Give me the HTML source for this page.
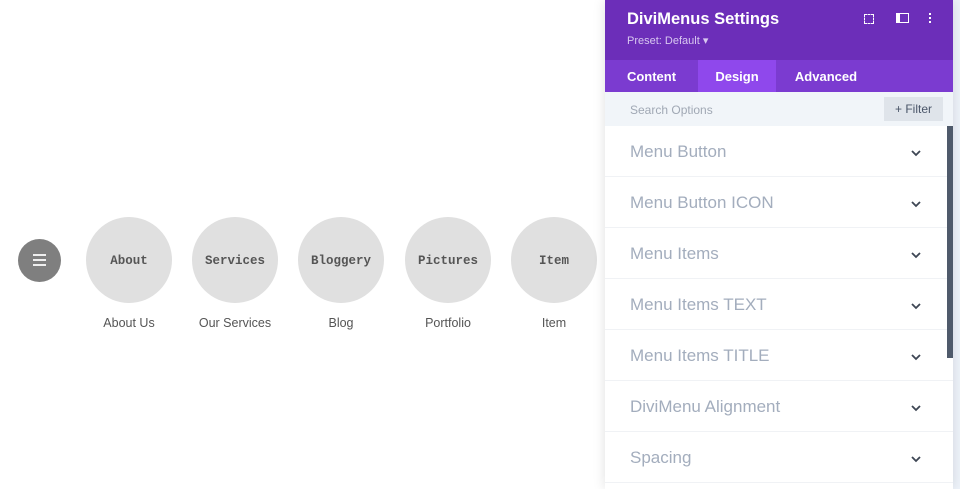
<!DOCTYPE html><html><head><style>
body{margin:0;width:960px;height:489px;overflow:hidden;background:#fff;font-family:"Liberation Sans",sans-serif;position:relative}
.c{position:absolute;top:217px;width:86px;height:86px;border-radius:50%;background:#e0e0e0;font-family:"Liberation Mono",monospace;font-size:12.5px;font-weight:bold;color:#555;display:flex;align-items:center;justify-content:center;padding-top:2px;box-sizing:border-box}
.l{position:absolute;top:316px;width:120px;text-align:center;font-size:12.5px;color:#555}
#p{position:absolute;left:605px;top:0;width:348px;height:489px;background:#fff;box-shadow:0 0 12px rgba(0,0,0,.12)}
.h{background:#6c2eb9;height:60px;position:relative;color:#fff}
.t{background:#7b3bd0;height:32px;display:flex;color:#fff;font-size:13px;font-weight:bold}
.t div{display:flex;align-items:center;justify-content:center}
.s{background:#f1f5f9;height:34px;position:relative;font-size:12px;color:#a0a8b4}
.r{height:50px;border-bottom:1px solid #f0f2f5;position:relative;font-size:17px;color:#a3adbd;line-height:52px;padding-left:25px}
.r svg{position:absolute;right:32px;top:24px}
</style></head><body>
<div style="position:absolute;left:18px;top:239px;width:43px;height:43px;border-radius:50%;background:#7f7f7f"><div style="position:absolute;left:15px;top:15px;width:13px;height:2px;background:#eee;box-shadow:0 5px 0 #eee,0 10px 0 #eee"></div></div>
<div class="c" style="left:86px">About</div><div class="c" style="left:192px">Services</div><div class="c" style="left:298px">Bloggery</div><div class="c" style="left:405px">Pictures</div><div class="c" style="left:511px">Item</div>
<div class="l" style="left:69px">About Us</div><div class="l" style="left:175px">Our Services</div><div class="l" style="left:281px">Blog</div><div class="l" style="left:388px">Portfolio</div><div class="l" style="left:494px">Item</div>
<div style="position:absolute;left:953px;top:0;width:7px;height:489px;background:#eef3fa"></div>
<div id="p">
<div class="h"><div style="position:absolute;left:22px;top:10px;font-size:16.5px;font-weight:bold">DiviMenus Settings</div><div style="position:absolute;left:22px;top:34px;font-size:11px;color:#d8c8f0">Preset: Default ▾</div>
<div style="position:absolute;left:259px;top:14px;width:8px;height:8px;border:1px dashed #fff"></div>
<div style="position:absolute;left:291px;top:13px;width:8px;height:8px;border:1.5px solid #fff;border-left-width:4px"></div>
<div style="position:absolute;left:324px;top:13px;width:2px;height:2px;background:#fff;box-shadow:0 4px 0 #fff,0 8px 0 #fff"></div></div>
<div class="t"><div style="width:93px">Content</div><div style="width:78px;background:#8f48ec">Design</div><div style="width:100px">Advanced</div></div>
<div class="s"><div style="position:absolute;left:25px;top:11px">Search Options</div><div style="position:absolute;left:279px;top:5px;width:59px;height:24px;background:#dfe4ea;color:#4a5568;font-size:12px;line-height:24px;text-align:center">+ Filter</div></div>
<div class="r">Menu Button<svg width="10" height="7"><path d="M1 1l4 4 4-4" stroke="#3d4654" stroke-width="1.8" fill="none"/></svg></div>
<div class="r">Menu Button ICON<svg width="10" height="7"><path d="M1 1l4 4 4-4" stroke="#3d4654" stroke-width="1.8" fill="none"/></svg></div>
<div class="r">Menu Items<svg width="10" height="7"><path d="M1 1l4 4 4-4" stroke="#3d4654" stroke-width="1.8" fill="none"/></svg></div>
<div class="r">Menu Items TEXT<svg width="10" height="7"><path d="M1 1l4 4 4-4" stroke="#3d4654" stroke-width="1.8" fill="none"/></svg></div>
<div class="r">Menu Items TITLE<svg width="10" height="7"><path d="M1 1l4 4 4-4" stroke="#3d4654" stroke-width="1.8" fill="none"/></svg></div>
<div class="r">DiviMenu Alignment<svg width="10" height="7"><path d="M1 1l4 4 4-4" stroke="#3d4654" stroke-width="1.8" fill="none"/></svg></div>
<div class="r">Spacing<svg width="10" height="7"><path d="M1 1l4 4 4-4" stroke="#3d4654" stroke-width="1.8" fill="none"/></svg></div>
<div style="position:absolute;right:0;top:126px;width:6px;height:232px;background:#4f5a6b;z-index:5"></div>
</div>
</body></html>
